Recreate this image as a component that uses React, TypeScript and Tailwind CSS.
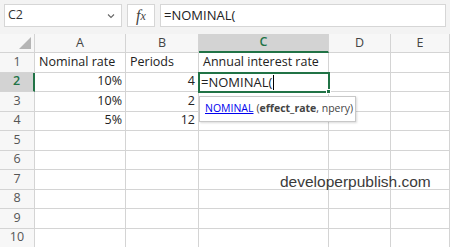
import * as React from "react";

const cols = [
  { name: "A", w: "w-[91px]" },
  { name: "B", w: "w-[73px]" },
  { name: "C", w: "w-[130px]" },
  { name: "D", w: "w-[62px]" },
  { name: "E", w: "flex-1" },
];

const data: Record<number, string[]> = {
  1: ["Nominal rate", "Periods", "Annual interest rate", "", ""],
  2: ["10%", "4", "", "", ""],
  3: ["10%", "2", "", "", ""],
  4: ["5%", "12", "", "", ""],
};

export default function App() {
  return (
    <div className="relative h-[247px] w-[450px] overflow-hidden bg-white font-['Open_Sans',sans-serif] text-[12.5px] text-[#222]">
      {/* formula bar */}
      <div className="flex h-[34px] items-start gap-[5px] bg-[#f3f3f3] px-[4px] pt-[4px]">
        <div className="flex h-[23px] w-[118px] items-center justify-between border border-[#d6d6d6] bg-white pl-[3px] pr-[6px] text-[#333]">
          <span>C2</span>
          <svg width="8" height="6" viewBox="0 0 8 6">
            <path d="M1 1.5 L4 4.5 L7 1.5" fill="none" stroke="#666" strokeWidth="1.1" />
          </svg>
        </div>
        <div className="flex h-[23px] w-[28px] items-center justify-center border border-[#d6d6d6] bg-white font-['Liberation_Serif',serif] text-[16px] italic text-[#444]">
          f<span className="text-[12px]">x</span>
        </div>
        <div className="flex h-[23px] flex-1 items-center border border-[#d6d6d6] bg-white pl-[3px] text-[13px] text-[#222]">
          =NOMINAL(
        </div>
      </div>

      {/* column headers */}
      <div className="flex h-[19px] bg-[#f7f7f7] text-[#444]">
        <div className="relative w-[35px] border-r border-b border-[#d4d4d4]">
          <svg className="absolute right-[3px] bottom-[3px]" width="12" height="12" viewBox="0 0 12 12">
            <path d="M12 0 L12 12 L0 12 Z" fill="#b5b5b5" />
          </svg>
        </div>
        {cols.map((c) =>
          c.name === "C" ? (
            <div key={c.name} className={`${c.w} flex items-center justify-center border-r border-b-2 border-[#d4d4d4] border-b-[#217346] bg-[#d3d3d3] font-semibold text-[#217346]`}>
              {c.name}
            </div>
          ) : (
            <div key={c.name} className={`${c.w} flex items-center justify-center border-r border-b border-[#d4d4d4]`}>
              {c.name}
            </div>
          )
        )}
      </div>

      {/* rows */}
      {Array.from({ length: 10 }, (_, i) => i + 1).map((r) => (
        <div key={r} className="flex h-[19.5px]">
          {r === 2 ? (
            <div className="flex w-[35px] items-center justify-center border-r-2 border-b border-[#d4d4d4] border-r-[#217346] bg-[#d3d3d3] font-semibold text-[#217346]">
              {r}
            </div>
          ) : (
            <div className="flex w-[35px] items-center justify-center border-r border-b border-[#d4d4d4] bg-[#f7f7f7] text-[#555]">
              {r}
            </div>
          )}
          {cols.map((c, ci) => {
            const v = data[r]?.[ci] ?? "";
            const right = r > 1 && (ci === 0 || ci === 1);
            return (
              <div
                key={c.name}
                className={`${c.w} flex items-center overflow-visible whitespace-nowrap border-r border-b border-[#d4d4d4] ${right ? "justify-end pr-[3px]" : "pl-[4px]"}`}
              >
                {v}
              </div>
            );
          })}
        </div>
      ))}

      {/* active cell C2 */}
      <div className="absolute top-[72px] left-[198px] flex h-[21px] w-[132px] items-center border-2 border-[#217346] bg-white pl-[1px] text-[13px]">
        =NOMINAL(<span className="ml-[1px] h-[15px] w-[1px] bg-black" />
        <div className="absolute right-[-3px] bottom-[-3px] h-[5px] w-[5px] border border-white bg-[#217346]" />
      </div>

      {/* tooltip */}
      <div className="absolute top-[96px] left-[199px] flex h-[26px] w-[157px] items-center border border-[#c8c8c8] bg-white pl-[5px] text-[10.5px] text-[#444] shadow-[1px_1px_2px_rgba(0,0,0,0.15)]">
        <span className="text-[#0000ee] underline">NOMINAL</span>
        <span className="ml-[3px]">(</span>
        <span className="font-bold">effect_rate</span>
        <span>, npery)</span>
      </div>

      {/* watermark */}
      <div className="absolute top-[170px] left-[280px] font-['Liberation_Sans',sans-serif] text-[15.5px] text-[#3a3a3a]">
        developerpublish.com
      </div>
    </div>
  );
}
